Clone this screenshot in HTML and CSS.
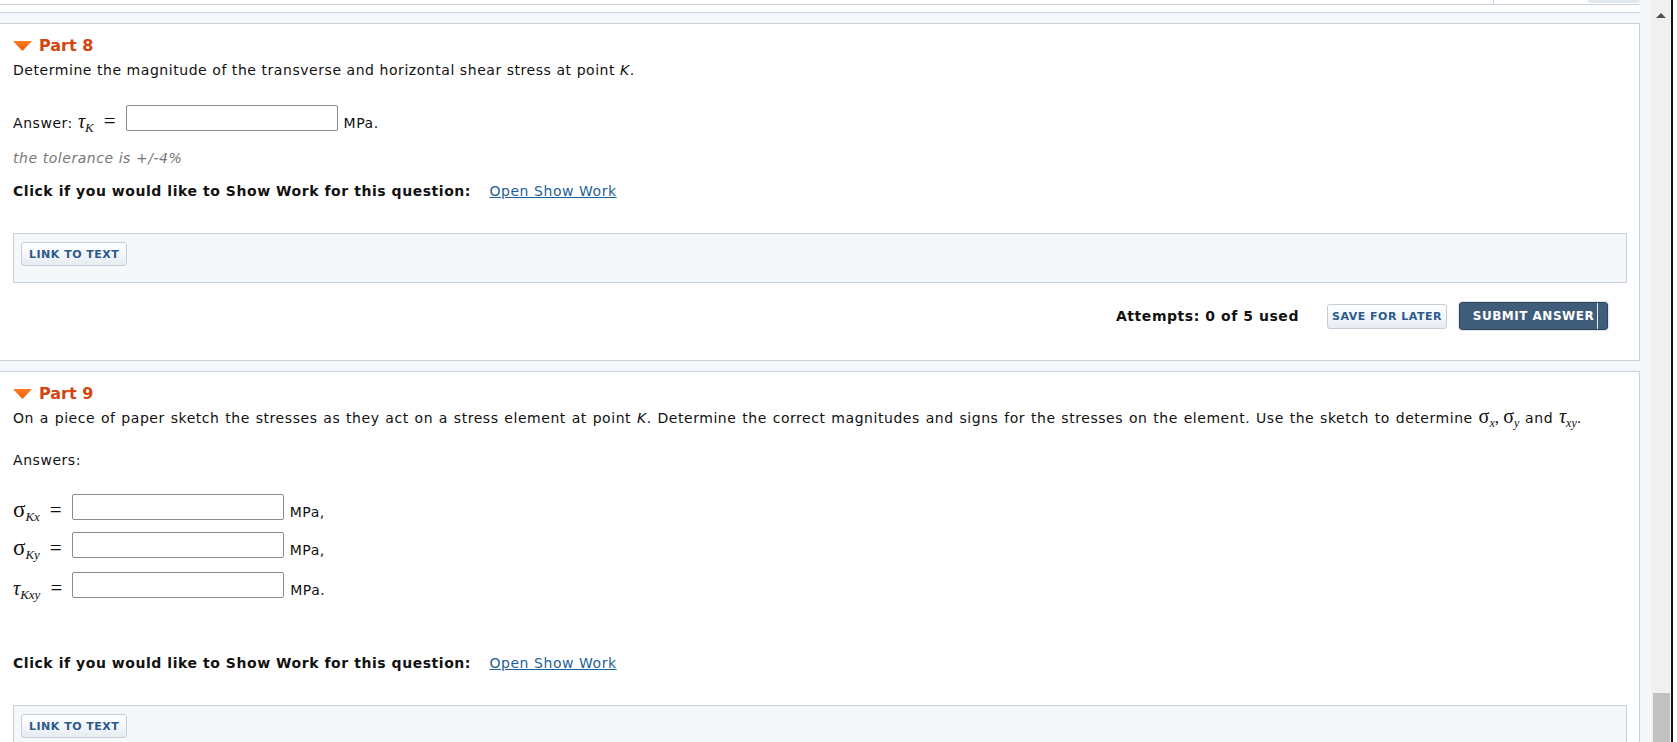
FILE: index.html
```html
<!DOCTYPE html>
<html lang="en">
<head>
    <meta charset="UTF-8">
    <meta name="viewport" content="width=device-width, initial-scale=1.0">
    <title>Assignment - Part 8 and Part 9</title>
    <link rel="stylesheet" href="styles.css">
</head>
<body>
    <div class="window">
        <div class="page">
            <div class="prev-card">
                <div class="prev-footer">
                    <span class="prev-divider"></span>
                    <span class="prev-button"></span>
                </div>
            </div>

            <!-- Part 8 -->
            <section class="part">
                <div class="part-title">
                    <svg class="caret" width="19" height="10" viewBox="0 0 19 10">
                        <defs>
                            <linearGradient id="caretFill" x1="0" y1="0" x2="0" y2="1">
                                <stop offset="0" stop-color="#ff7d22"/>
                                <stop offset="1" stop-color="#e8590c"/>
                            </linearGradient>
                        </defs>
                        <polygon points="0,0 19,0 9.5,10" fill="url(#caretFill)"/>
                    </svg>
                    <span>Part 8</span>
                </div>
                <p class="part-desc">Determine the magnitude of the transverse and horizontal shear stress at point <i>K</i>.</p>

                <div class="answer-row">
                    <span class="answer-label">Answer:</span>
                    <span class="math"><i class="tau">τ</i><sub>K</sub><span class="eq">=</span></span>
                    <input type="text" class="answer-input">
                    <span class="unit">MPa.</span>
                </div>

                <p class="tolerance">the tolerance is +/-4%</p>

                <p class="show-work">Click if you would like to Show Work for this question: <a href="#" class="show-link">Open Show Work</a></p>

                <div class="link-box">
                    <button class="btn-light">LINK TO TEXT</button>
                </div>

                <div class="part-footer">
                    <span class="attempts">Attempts: 0 of 5 used</span>
                    <button class="btn-light btn-save">SAVE FOR LATER</button>
                    <button class="btn-submit">SUBMIT ANSWER</button>
                </div>
            </section>

            <!-- Part 9 (continues below the fold) -->
            <section class="part">
                <div class="part-title">
                    <svg class="caret" width="19" height="10" viewBox="0 0 19 10">
                        <polygon points="0,0 19,0 9.5,10" fill="url(#caretFill)"/>
                    </svg>
                    <span>Part 9</span>
                </div>
                <p class="part-desc part-desc-long">On a piece of paper sketch the stresses as they act on a stress element at point <i>K</i>. Determine the correct magnitudes and signs for the stresses on the element. Use the sketch to determine <span class="math inline"><span class="sigma">σ</span><sub>x</sub>, <span class="sigma">σ</span><sub>y</sub></span> and <span class="math inline"><i class="tau">τ</i><sub>xy</sub></span>.</p>

                <p class="answers-label">Answers:</p>

                <div class="answer-row row-first">
                    <span class="math"><span class="sigma">σ</span><sub>Kx</sub><span class="eq">=</span></span>
                    <input type="text" class="answer-input">
                    <span class="unit">MPa,</span>
                </div>
                <div class="answer-row row-second">
                    <span class="math"><span class="sigma">σ</span><sub>Ky</sub><span class="eq">=</span></span>
                    <input type="text" class="answer-input">
                    <span class="unit">MPa,</span>
                </div>
                <div class="answer-row row-third">
                    <span class="math"><i class="tau">τ</i><sub>Kxy</sub><span class="eq">=</span></span>
                    <input type="text" class="answer-input">
                    <span class="unit">MPa.</span>
                </div>

                <p class="show-work show-work-far">Click if you would like to Show Work for this question: <a href="#" class="show-link">Open Show Work</a></p>

                <div class="link-box">
                    <button class="btn-light">LINK TO TEXT</button>
                </div>
            </section>
        </div>

        <div class="scrollbar">
            <span class="arrow-up"></span>
            <span class="thumb"></span>
        </div>
        <div class="edge"></div>
    </div>
</body>
</html>
```

FILE: styles.css
```css
html, body {
    margin: 0;
    height: 742px;
    overflow: hidden;
}
body {
    font-family: "DejaVu Sans", Verdana, sans-serif;
    font-size: 14px;
    letter-spacing: 0.55px;
    color: #111;
    background-color: #fff;
}
.window {
    display: flex;
    height: 742px;
}
.page {
    flex: 1;
    background-color: #f5f8fb;
    overflow: hidden;
}
.prev-card {
    height: 13px;
    box-sizing: border-box;
    background: #fff;
    border-bottom: 1px solid #c8d0dc;
    margin-right: 11px;
}
.prev-footer {
    display: flex;
    justify-content: flex-end;
    align-items: flex-start;
    height: 5px;
    box-sizing: border-box;
    border-bottom: 1px solid #c8d0dc;
}
.prev-divider {
    width: 1px;
    height: 4px;
    background: #c8d0dc;
    margin-right: 94px;
}
.prev-button {
    width: 52px;
    height: 3px;
    background: #e2e7ee;
    border-radius: 0 0 4px 4px;
}
.part {
    background: #fff;
    border: 1px solid #c8d0dc;
    margin: 10px 11px 0 -1px;
    padding: 0 12px 0 13px;
}
.part-title {
    display: flex;
    align-items: center;
    gap: 7px;
    margin-top: 10px;
    height: 22px;
    font-size: 16px;
    font-weight: bold;
    letter-spacing: 0;
    color: #d2450e;
}
.caret {
    display: block;
    margin-top: 2px;
}
p {
    margin: 0;
}
.part-desc {
    margin-top: 4px;
    line-height: 20px;
}
.part-desc-long {
    word-spacing: 0.8px;
}
.answer-row {
    display: flex;
    align-items: flex-end;
    height: 26px;
    margin-top: 25px;
}
.answer-label {
    line-height: 20px;
    margin: 0 5px -2px 0;
}
.math {
    font-family: "Liberation Serif", "DejaVu Serif", serif;
    font-size: 18px;
    line-height: 20px;
    letter-spacing: 0;
    word-spacing: 0;
    white-space: nowrap;
    margin-bottom: -1px;
}
.math sub {
    font-style: italic;
    font-size: 13px;
    line-height: 0;
    vertical-align: -4px;
}
.tau {
    font-size: 20px;
}
.sigma {
    font-size: 23px;
}
.eq {
    margin: 0 10px 0 10px;
    font-size: 21px;
}
.math.inline {
    font-size: 17px;
    line-height: 0;
    margin: 0;
}
.math.inline .sigma {
    font-size: 20px;
}
.math.inline sub {
    font-size: 12px;
}
.answer-input {
    width: 212px;
    height: 26px;
    box-sizing: border-box;
    border: 1px solid #8c8c8c;
    border-radius: 2px;
    background: #fff;
    margin: 0;
}
.unit {
    line-height: 20px;
    margin: 0 0 -2px 6px;
}
.tolerance {
    margin-top: 17px;
    line-height: 20px;
    font-style: italic;
    color: #777;
}
.show-work {
    margin-top: 13px;
    line-height: 20px;
    font-weight: bold;
}
.show-link {
    margin-left: 13px;
    font-weight: normal;
    color: #1f5f99;
}
.link-box {
    margin-top: 32px;
    background: #f5f8fb;
    border: 1px solid #c8d0dc;
    padding: 8px 7px 16px;
}
.btn-light {
    display: block;
    height: 24px;
    padding: 0 7px;
    background: linear-gradient(#ffffff, #e7ecf2);
    border: 1px solid #c6cdd8;
    border-radius: 3px;
    color: #2b5a8c;
    font-family: "DejaVu Sans", Verdana, sans-serif;
    font-size: 11px;
    font-weight: bold;
    letter-spacing: 0.5px;
    white-space: nowrap;
    cursor: pointer;
}
.part-footer {
    display: flex;
    justify-content: flex-end;
    align-items: center;
    height: 28px;
    margin: 19px 19px 0 0;
    padding-bottom: 30px;
}
.attempts {
    font-weight: bold;
    font-size: 14px;
    margin-right: 28px;
}
.btn-save {
    height: 25px;
    width: 120px;
    padding: 0;
    margin-right: 12px;
}
.btn-submit {
    height: 28px;
    width: 149px;
    padding: 0;
    background: linear-gradient(to left, #3f5c7a 9px, #e8edf2 9px, #e8edf2 10px, #3f5c7a 10px);
    border: 1px solid #2c435a;
    border-radius: 3px;
    box-shadow: 0 0 2px rgba(0, 0, 0, 0.35);
    color: #fff;
    font-family: "DejaVu Sans", Verdana, sans-serif;
    font-size: 12px;
    font-weight: bold;
    letter-spacing: 0.5px;
    white-space: nowrap;
    cursor: pointer;
}
.answers-label {
    margin-top: 22px;
    line-height: 20px;
}
.row-first {
    margin-top: 24px;
}
.row-second {
    margin-top: 12px;
}
.row-third {
    margin-top: 14px;
}
.show-work-far {
    margin-top: 55px;
}
.scrollbar {
    width: 20px;
    background: #f0f0f0;
    display: flex;
    flex-direction: column;
    justify-content: space-between;
    align-items: center;
}
.arrow-up {
    margin-top: 13px;
    width: 0;
    height: 0;
    border-left: 5px solid transparent;
    border-right: 5px solid transparent;
    border-bottom: 5px solid #505050;
}
.thumb {
    width: 17px;
    height: 49px;
    background: #c1c1c1;
}
.edge {
    width: 6px;
    border-left: 2px solid #111;
    box-sizing: border-box;
    background: #fff;
}
```
